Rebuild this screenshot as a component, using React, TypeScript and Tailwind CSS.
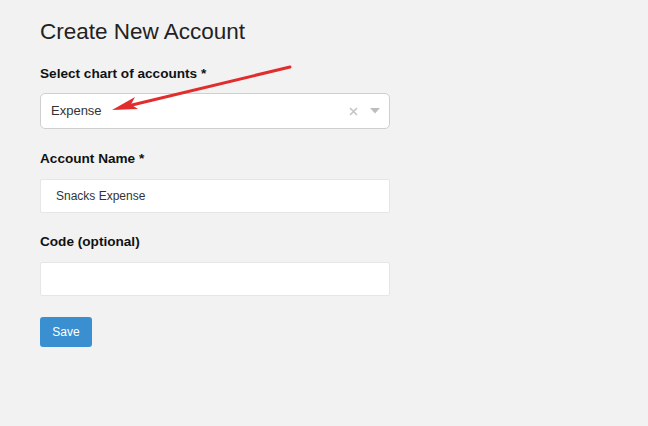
import React from "react";

export default function App() {
  const font = { fontFamily: '"Liberation Sans", Arial, sans-serif' };
  return (
    <div className="relative min-h-screen w-full bg-[#f2f2f2]" style={font}>
      <div className="flex w-[350px] flex-col pl-[40px] pt-[19px] box-content">
        <h1 className="text-[22.5px] leading-[26px] font-normal text-[#222]">Create New Account</h1>

        <label className="mt-[20px] text-[13.6px] leading-[18px] font-bold text-[#111]">Select chart of accounts *</label>
        <div className="mt-[10px] flex h-[36px] items-center rounded-[5px] border border-[#cfcfcf] bg-white pl-[10px] pr-[9px]">
          <span className="flex-1 text-[13px] text-[#333]">Expense</span>
          <svg className="mr-[12px]" width="9" height="9" viewBox="0 0 9 9">
            <path d="M1 1 L8 8 M8 1 L1 8" stroke="#c4c4c4" strokeWidth="1.6" />
          </svg>
          <svg width="10" height="6" viewBox="0 0 10 6">
            <path d="M0 0 L10 0 L5 5.5 Z" fill="#bdbdbd" />
          </svg>
        </div>

        <label className="mt-[21px] text-[13.6px] leading-[18px] font-bold text-[#111]">Account Name *</label>
        <div className="mt-[11px] flex h-[34px] items-center rounded-[2px] border border-[#e6e6e6] bg-white pl-[15px]">
          <span className="text-[12px] text-[#333]">Snacks Expense</span>
        </div>

        <label className="mt-[20px] text-[13.6px] leading-[18px] font-bold text-[#111]">Code (optional)</label>
        <div className="mt-[11px] h-[34px] rounded-[2px] border border-[#e6e6e6] bg-white" />

        <button className="mt-[21px] flex h-[30px] w-[52px] items-center justify-center rounded-[3px] bg-[#3a8fd1] text-[12px] text-white">
          Save
        </button>
      </div>

      <svg className="pointer-events-none absolute left-0 top-0" width="648" height="426">
        <line x1="290" y1="67" x2="132" y2="105" stroke="#e22d2d" strokeWidth="3" strokeLinecap="round" />
        <path d="M112 110 L135 97 L131 104.5 L138 109 Z" fill="#e22d2d" />
      </svg>
    </div>
  );
}
